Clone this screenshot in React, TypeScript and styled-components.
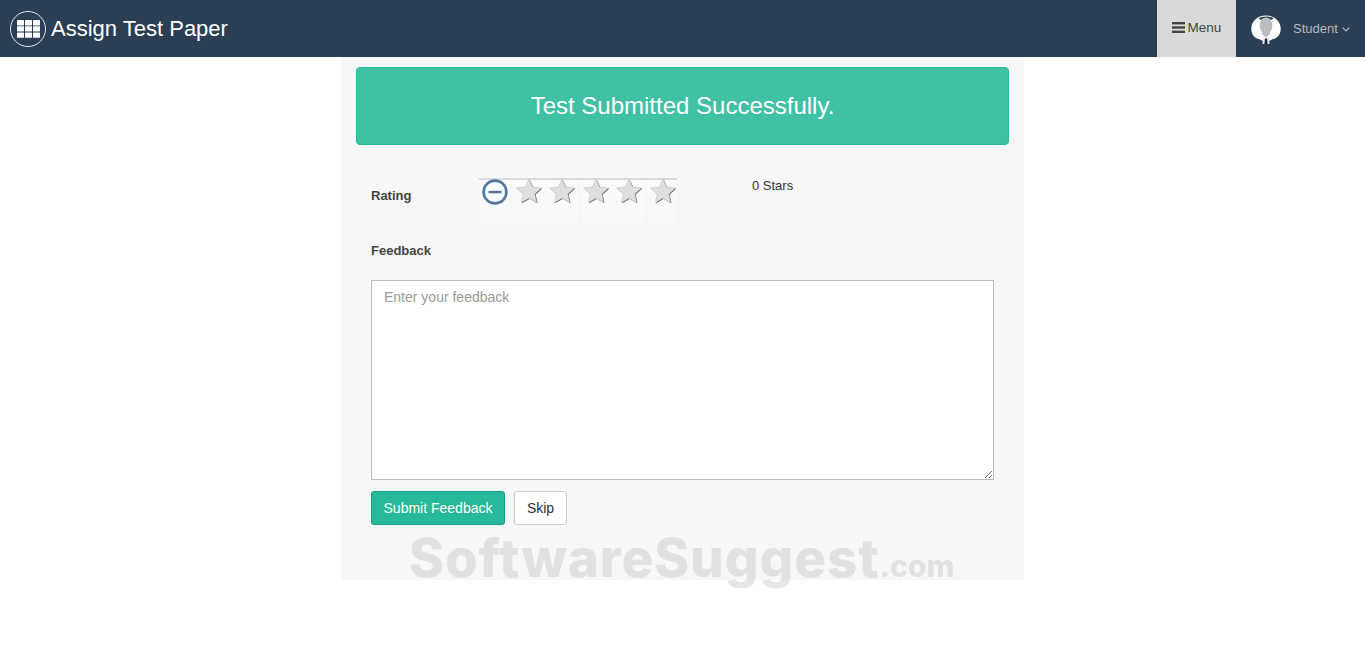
import * as React from 'react';
import styled, { createGlobalStyle } from 'styled-components';

const GlobalStyle = createGlobalStyle`
    html, body {
        margin: 0;
        padding: 0;
        background: #fff;
        font-family: "Liberation Sans", Arial, sans-serif;
        font-size: 14px;
        color: #333;
    }
    * {
        box-sizing: border-box;
    }
`

const Page = styled.div`
    width: 1365px;
    height: 657px;
    overflow: hidden;
`

const TopBar = styled.header`
    height: 57px;
    background: #2a3f54;
    display: flex;
    align-items: stretch;
`

const Brand = styled.div`
    display: flex;
    align-items: center;
    flex: 1;
    padding: 1px 0 0 10px;
    gap: 5px;
    color: #fff;
    font-size: 22px;
`

const BrandBadge = styled.span`
    width: 36px;
    height: 36px;
    margin-top: -1px;
    border: 1px solid #e6e6e6;
    border-radius: 50%;
    display: flex;
    align-items: center;
    justify-content: center;
`

const MenuButton = styled.div`
    width: 79px;
    background: #d9dadb;
    color: #444;
    font-size: 13.5px;
    display: flex;
    align-items: center;
    justify-content: center;
    gap: 3px;
    padding-bottom: 2px;
`

const UserBox = styled.div`
    width: 129px;
    display: flex;
    align-items: center;
    padding-left: 15px;
    color: #bab8b8;
    font-size: 13px;
    gap: 12px;
`

const UserName = styled.span`
    padding-bottom: 1px;
`

const Caret = styled.svg`
    margin-left: 4px;
    vertical-align: 1px;
`

const Panel = styled.main`
    position: relative;
    width: 683px;
    height: 523px;
    margin-left: 341px;
    background: #f7f7f7;
    padding: 10px 15px 0;
`

const Banner = styled.div`
    height: 78px;
    background: #40c1a4;
    border: 1px solid #26b99a;
    border-radius: 4px;
    color: #fff;
    font-size: 24px;
    display: flex;
    align-items: center;
    justify-content: center;
`

const Form = styled.div`
    padding: 33px 15px 0;
`

const RatingRow = styled.div`
    display: flex;
    height: 45px;
`

const Label = styled.label`
    width: 108px;
    font-size: 13px;
    font-weight: bold;
    color: #444;
    padding-top: 10px;
    line-height: 15px;
`

const Stars = styled.div`
    width: 198px;
    display: flex;
    gap: 1.6px;
    overflow-x: clip;
    border-top: 2px solid #d8dadb;
`

const StarCell = styled.span`
    flex: none;
    width: 32px;
    height: 43px;
    background: #f8fafc;
    border-radius: 0 0 4px 4px;
    display: flex;
    justify-content: center;
    align-items: flex-start;
`

const MinusSvg = styled.svg`
    margin: -1px 1px 0 0;
`

const StarSvg = styled.svg`
    flex: none;
    margin-top: -2px;
`

const StarCount = styled.span`
    margin-left: 75px;
    font-size: 13px;
    line-height: 15px;
    color: #333;
`

const FeedbackLabel = styled(Label)`
    display: block;
    width: auto;
    padding-top: 20px;
`

const FeedbackBox = styled.textarea`
    display: block;
    width: 623px;
    height: 200px;
    margin-top: 22px;
    padding: 8px 12px;
    border: 1px solid #bbb;
    border-radius: 0;
    background: #fff;
    font-family: "Liberation Sans", Arial, sans-serif;
    font-size: 14px;
    line-height: 17px;
    color: #555;
    outline: none;

    &::placeholder {
        color: #999;
        opacity: 1;
    }
`

const Actions = styled.div`
    display: flex;
    gap: 9px;
    margin-top: 11px;
`

const Button = styled.button<{ $primary?: boolean }>`
    height: 34px;
    width: ${props => props.$primary ? '134px' : '53px'};
    padding: 0;
    border: 1px solid ${props => props.$primary ? '#169f85' : '#ccc'};
    border-radius: 3px;
    background: ${props => props.$primary ? '#26b99a' : '#fff'};
    color: ${props => props.$primary ? '#fff' : '#333'};
    font-family: "Liberation Sans", Arial, sans-serif;
    font-size: 14px;
`

const Watermark = styled.div`
    position: absolute;
    left: 68px;
    top: 470px;
    white-space: nowrap;
    font-family: Inter, sans-serif;
    font-weight: 800;
    font-size: 53px;
    line-height: 62px;
    letter-spacing: 0.9px;
    color: rgba(190, 190, 190, 0.38);
    pointer-events: none;
`

const WatermarkTld = styled.span`
    font-size: 30px;
    letter-spacing: 0;
`

const GridIcon = () => (
    <svg width="23" height="18" viewBox="0 0 23 18">
        {[0, 6.2, 12.4].map(y => [0, 8, 16].map(x => (
            <rect key={`${x}-${y}`} x={x} y={y} width="7" height="5.4" rx="0.6" fill="#fff" />
        )))}
    </svg>
);

const BarsIcon = () => (
    <svg width="13" height="11" viewBox="0 0 13 11">
        <rect y="0" width="13" height="2.4" fill="#444" />
        <rect y="4.3" width="13" height="2.4" fill="#444" />
        <rect y="8.6" width="13" height="2.4" fill="#444" />
    </svg>
);

const Avatar = () => (
    <svg width="30" height="30" viewBox="0 0 30 30">
        <path d="M15 1.5 C6 1.5 0 8 0.3 15 C0.5 21 4 24.5 8 25 L12 27 L18 27 L22 25 C26 24.5 29.5 21 29.7 15 C30 8 24 1.5 15 1.5 Z" fill="#fff" />
        <path d="M7.5 4.5 C10 1.8 20 1.8 22.5 4.5 L20 6 C17 4 13 4 10 6 Z" fill="#32475c" />
        <ellipse cx="15" cy="11.5" rx="6.4" ry="8" fill="#b9bcc1" />
        <path d="M11 16 L19 16 L19 20 L15 23.5 L11 20 Z" fill="#b9bcc1" />
        <path d="M12 23 L15 25 L18 23 L18.5 30 L11.5 30 Z" fill="#e8e8e8" />
        <path d="M14 24.5 L16 24.5 L16.6 30 L13.4 30 Z" fill="#1a2533" />
    </svg>
);

const MinusCircle = () => (
    <MinusSvg width="26" height="26" viewBox="0 0 26 26">
        <circle cx="13" cy="13" r="11.4" fill="none" stroke="#54779d" strokeWidth="2.6" />
        <rect x="6.5" y="11.8" width="13" height="2.5" fill="#54779d" />
    </MinusSvg>
);

const Star = () => (
    <StarSvg width="28" height="26" viewBox="0 0 28 26">
        <path d="M14.6 1.5 L18.3 9.6 L27.2 10.5 L20.6 16.5 L22.5 25.2 L14.8 20.8 L7.1 25.2 L9 16.5 L2.4 10.5 L11.1 9.6 Z" fill="#3c4650" />
        <path d="M14 1 L17.6 9.1 L26.4 10 L19.8 16 L21.6 24.6 L14 20.2 L6.4 24.6 L8.2 16 L1.6 10 L10.4 9.1 Z" fill="#dfdfdf" stroke="#c9c4b8" strokeWidth="0.6" />
    </StarSvg>
);

export default function App() {
    return (
        <Page>
            <GlobalStyle />
            <TopBar>
                <Brand>
                    <BrandBadge><GridIcon /></BrandBadge>
                    <span>Assign Test Paper</span>
                </Brand>
                <MenuButton><BarsIcon /> Menu</MenuButton>
                <UserBox>
                    <Avatar />
                    <UserName>
                        Student
                        <Caret width="8" height="5" viewBox="0 0 8 5">
                            <path d="M0.7 0.7 L4 4 L7.3 0.7" fill="none" stroke="#bab8b8" strokeWidth="1.1" />
                        </Caret>
                    </UserName>
                </UserBox>
            </TopBar>
            <Panel>
                <Banner>Test Submitted Successfully.</Banner>
                <Form>
                    <RatingRow>
                        <Label>Rating</Label>
                        <Stars>
                            <StarCell><MinusCircle /></StarCell>
                            {[1, 2, 3, 4, 5].map(n => <StarCell key={n}><Star /></StarCell>)}
                        </Stars>
                        <StarCount>0 Stars</StarCount>
                    </RatingRow>
                    <FeedbackLabel>Feedback</FeedbackLabel>
                    <FeedbackBox placeholder="Enter your feedback" />
                    <Actions>
                        <Button $primary>Submit Feedback</Button>
                        <Button>Skip</Button>
                    </Actions>
                </Form>
                <Watermark>SoftwareSuggest<WatermarkTld>.com</WatermarkTld></Watermark>
            </Panel>
        </Page>
    );
}
